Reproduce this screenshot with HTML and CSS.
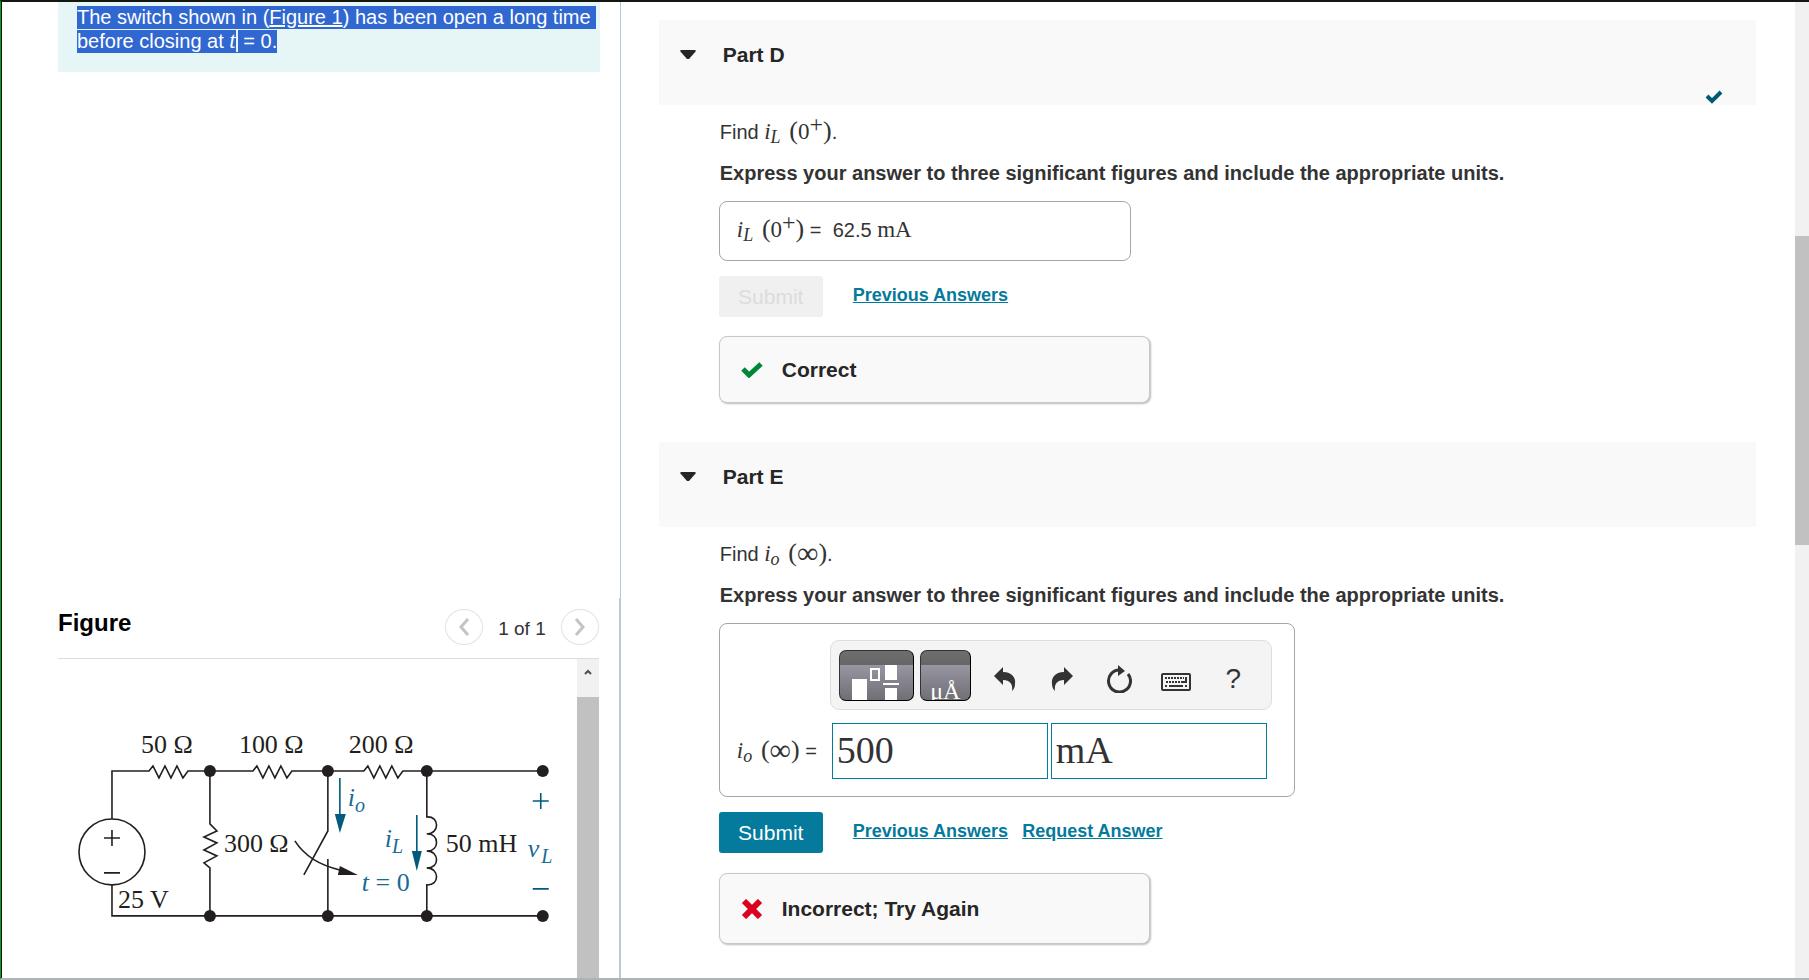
FILE: index.html
```html
<!DOCTYPE html>
<html lang="en">
<head>
  <meta charset="UTF-8" />
  <meta name="viewport" content="width=device-width, initial-scale=1.0"/>
  <title>Circuit Homework</title>
  <link rel="stylesheet" href="styles.css">
</head>
<body>
  <div class="page">
    <aside class="left">
      <section class="problem-area">
        <p class="problem"><span class="marked">The switch shown in (<a href="#figure">Figure 1</a>) has been open a long time&nbsp;</span><br><span class="marked">before closing at <i class="math">t</i><span class="cursor"></span> = 0.</span></p>
      </section>

      <section class="figure" id="figure">
        <div class="figure-head">
          <h2>Figure</h2>
          <div class="pager">
            <button type="button" aria-label="Previous figure">
              <svg width="12" height="20" viewBox="0 0 12 20"><path d="M10 2 L3 10 L10 18"/></svg>
            </button>
            <span>1 of 1</span>
            <button type="button" aria-label="Next figure">
              <svg width="12" height="20" viewBox="0 0 12 20"><path d="M2 2 L9 10 L2 18"/></svg>
            </button>
          </div>
        </div>
        <div class="figure-body">
          <div class="drawing">
            <svg class="circuit" viewBox="0 0 517 260" role="img" aria-label="Circuit diagram">
              <g class="wire">
                <path d="M52 109 V61 H86 l3 0 l4 -5 l6 12 l6 -12 l6 12 l6 -12 l6 12 l5 -7 H190 l3 0 l4 -5 l6 12 l6 -12 l6 12 l6 -12 l6 12 l5 -7 H301 l3 0 l4 -5 l6 12 l6 -12 l6 12 l6 -12 l6 12 l5 -7 H483"/>
                <path d="M52 175 V206 H483"/>
                <path d="M150 61 V114 l7 7 l-13 6 l13 6 l-13 7 l13 6 l-13 7 l6 5 V206"/>
                <path d="M268 61 V121 L244 165 M268 149 V206"/>
                <path d="M367 61 V107 C380 106 380 124 367 124 C380 123 380 142 367 141 C380 141 380 159 367 158 C380 158 380 176 367 175 V206"/>
                <path d="M235 131 Q249 153 280 160"/>
                <circle cx="52" cy="142" r="33"/>
                <path d="M44 163 H60 M44 128 H60 M52 120 V136"/>
              </g>
              <path class="dot" d="M280 156 L298 165 L278 165 Z"/>
              <g class="dot">
                <circle cx="150" cy="61" r="6"/>
                <circle cx="268" cy="61" r="6"/>
                <circle cx="367" cy="61" r="6"/>
                <circle cx="483" cy="61" r="6"/>
                <circle cx="150" cy="206" r="6"/>
                <circle cx="268" cy="206" r="6"/>
                <circle cx="367" cy="206" r="6"/>
                <circle cx="483" cy="206" r="6"/>
              </g>
              <g class="current">
                <path d="M280 68 V106 M357 105 V143 M473 91 H489 M481 83 V99 M473 179 H489"/>
                <path class="head" d="M275 104 H286 L280 123 Z M352 141 H362 L357 161 Z"/>
              </g>
              <g class="label">
                <text x="81" y="43">50 Ω</text>
                <text x="179" y="43">100 Ω</text>
                <text x="289" y="43">200 Ω</text>
                <text x="164" y="142">300 Ω</text>
                <text x="58" y="198">25 V</text>
                <text x="386" y="142">50 mH</text>
              </g>
              <g class="label blue">
                <text x="288" y="96"><tspan class="it">i</tspan><tspan class="it sub" dy="6">o</tspan></text>
                <text x="325" y="137"><tspan class="it">i</tspan><tspan class="it sub" dy="6">L</tspan></text>
                <text x="468" y="147"><tspan class="it">v</tspan><tspan class="it sub" dx="2" dy="6">L</tspan></text>
                <text x="302" y="181"><tspan class="it">t</tspan> = 0</text>
              </g>
            </svg>
          </div>
          <div class="figure-scroll">
            <svg width="8" height="6" viewBox="0 0 8 6"><path d="M1 5 L4 2 L7 5"/></svg>
            <div class="thumb"></div>
          </div>
        </div>
      </section>
    </aside>

    <main class="parts">
      <section class="part">
        <header class="part-head">
          <svg class="toggle" width="16" height="9" viewBox="0 0 16 9"><path d="M1 0 H15 L16 1 L9 9 H7 L0 1 Z"/></svg>
          <h2>Part D</h2>
          <svg class="done" width="18" height="14" viewBox="0 0 18 14"><path d="M2 6 L7 11 L16 2"/></svg>
        </header>
        <div class="part-body">
          <p class="question">Find <span class="math"><i>i<sub>L</sub></i> <span class="paren open">(</span>0<sup>+</sup><span class="paren">)</span></span>.</p>
          <p class="instruction">Express your answer to three significant figures and include the appropriate units.</p>
          <div class="answer answer-done">
            <span class="math"><i>i<sub>L</sub></i> <span class="paren open">(</span>0<sup>+</sup><span class="paren">)</span></span> =&nbsp; 62.5 <span class="math">mA</span>
          </div>
          <div class="actions">
            <button type="button" class="submit" disabled>Submit</button>
            <a href="#">Previous Answers</a>
          </div>
          <div class="feedback">
            <svg class="correct" width="22" height="16" viewBox="0 0 22 16"><path d="M2 7 L8 13 L20 2"/></svg>
            <strong>Correct</strong>
          </div>
        </div>
      </section>

      <section class="part">
        <header class="part-head">
          <svg class="toggle" width="16" height="9" viewBox="0 0 16 9"><path d="M1 0 H15 L16 1 L9 9 H7 L0 1 Z"/></svg>
          <h2>Part E</h2>
        </header>
        <form class="part-body">
          <p class="question">Find <span class="math"><i>i<sub>o</sub></i> <span class="paren open">(</span><span class="inf">∞</span><span class="paren">)</span></span>.</p>
          <p class="instruction">Express your answer to three significant figures and include the appropriate units.</p>
          <div class="answer answer-edit">
            <div class="toolbar">
              <button type="button" class="palette wide" aria-label="Templates">
                <svg width="73" height="49" viewBox="0 0 73 49">
                  <path class="fill" d="M12 28 H27 V49 H12 Z M45 14 H57 V29 H45 Z M45 37 H57 V49 H45 Z M43 32 H59 V34 H43 Z"/>
                  <path class="line" d="M31 18 H39 V29 H31 Z"/>
                </svg>
              </button>
              <button type="button" class="palette" aria-label="Symbols"><span>μÅ</span></button>
              <button type="button" class="tool" aria-label="Undo">
                <svg width="22" height="24" viewBox="0 0 22 24"><path class="fill" d="M0 9 L9 0 V5 C18 5 22 11 21 17 C21 20 20 22 18 24 C19 17 16 13 9 13 V18 Z"/></svg>
              </button>
              <button type="button" class="tool" aria-label="Redo">
                <svg width="22" height="24" viewBox="0 0 22 24"><path class="fill" d="M22 9 L13 0 V5 C4 5 0 11 1 17 C1 20 2 22 4 24 C3 17 6 13 13 13 V18 Z"/></svg>
              </button>
              <button type="button" class="tool" aria-label="Reset">
                <svg width="26" height="28" viewBox="0 0 26 28"><path class="ring" d="M14 5 A11 11 0 1 0 22 9"/><path class="fill" d="M12 0 L19 6 L12 11 Z"/></svg>
              </button>
              <button type="button" class="tool keyboard" aria-label="Keyboard shortcuts">
                <svg width="30" height="18" viewBox="0 0 30 18">
                  <rect class="frame" x="1" y="1" width="28" height="16" rx="1"/>
                  <path class="keys" d="M4 5 H23 M5 9 H22"/>
                  <path class="line" d="M4 13 H6 M8 13 H22 M24 13 H26 M25 4 V9 H22"/>
                </svg>
              </button>
              <button type="button" class="tool help" aria-label="Help">?</button>
            </div>
            <label class="eq" for="value"><span class="math"><i>i<sub>o</sub></i> <span class="paren open">(</span><span class="inf">∞</span><span class="paren">)</span></span> =</label>
            <div class="fields">
              <input type="text" id="value" value="500">
              <input type="text" id="units" value="mA" aria-label="Units">
            </div>
          </div>
          <div class="actions">
            <button type="submit" class="submit">Submit</button>
            <a href="#">Previous Answers</a>
            <a href="#">Request Answer</a>
          </div>
          <div class="feedback tall">
            <svg class="wrong" width="22" height="20" viewBox="0 0 22 20"><path d="M3 2 L19 18 M19 2 L3 18"/></svg>
            <strong>Incorrect; Try Again</strong>
          </div>
        </form>
      </section>
    </main>

    <div class="page-scroll"><div class="thumb"></div></div>
  </div>
</body>
</html>
```
FILE: styles.css
```css
* {
  box-sizing: border-box;
}

body {
  margin: 0;
  font-family: "Liberation Sans", Arial, sans-serif;
  font-size: 20px;
  color: #333;
  background-color: #fff;
}

h2, p {
  margin: 0;
}

svg {
  display: block;
  fill: none;
}

button {
  font-family: inherit;
  padding: 0;
  cursor: pointer;
}

.page {
  display: grid;
  grid-template-columns: 19fr 36fr 14px;
  grid-template-rows: minmax(0, 1fr);
  height: 100vh;
  border-top: 2px solid #14170f;
  border-bottom: 2px solid #b0b4b4;
  border-left: 1px solid #00a020;
  box-shadow: inset 1px 0 #111;
  overflow: hidden;
}

/* left column */
.left {
  display: flex;
  flex-direction: column;
  min-height: 0;
}

.problem-area {
  flex: 1;
  margin-left: 57px;
  padding-right: 20px;
  border-right: 1px solid #b8c9dc;
}

.problem {
  height: 70px;
  padding: 3px 0 0 19px;
  line-height: 24px;
  background-color: #e6f6f6;
  color: #fff;
  white-space: nowrap;
}

.problem a {
  color: #fff;
}

.marked {
  padding-bottom: 1px;
  background-color: #3067d1;
}

.cursor {
  border-left: 2px solid #e6f6f6;
}

.figure {
  flex: 0 0 380px;
  display: flex;
  flex-direction: column;
  margin-left: 57px;
  padding-right: 20px;
  border-right: 2px solid #b8c9dc;
}

.figure-head {
  display: flex;
  justify-content: space-between;
  height: 61px;
  padding-top: 11px;
  border-bottom: 1px solid #ddd;
}

.figure-head h2 {
  font-size: 24px;
  line-height: 28px;
  color: #000;
}

.pager {
  display: flex;
  gap: 15px;
  font-size: 19px;
  line-height: 40px;
}

.pager button {
  display: flex;
  align-items: center;
  justify-content: center;
  width: 38px;
  height: 36px;
  border: 1px solid #e2e2e2;
  border-radius: 50%;
  background-color: #fff;
}

.pager path {
  stroke: #c4c4c4;
  stroke-width: 3;
}

.figure-body {
  display: flex;
  flex: 1;
  min-height: 0;
}

.drawing {
  flex: 1;
  padding: 51px 0 0 2px;
  overflow: hidden;
}

.circuit {
  width: 100%;
}

.wire {
  stroke: #231f20;
  stroke-width: 1.6;
}

.dot {
  fill: #231f20;
}

.current {
  stroke: #005b7f;
  stroke-width: 1.6;
}

.current .head {
  fill: #005b7f;
  stroke: none;
}

.label {
  fill: #231f20;
  font-family: "Liberation Serif", "Times New Roman", serif;
  font-size: 26px;
}

.blue {
  fill: #1a6a94;
}

.it {
  font-style: italic;
}

.sub {
  font-size: 20px;
}

.figure-scroll {
  display: flex;
  flex-direction: column;
  width: 22px;
  padding-top: 10px;
  background-color: #f1f1f1;
}

.figure-scroll svg {
  margin: 0 auto 22px;
}

.figure-scroll path {
  stroke: #505050;
  stroke-width: 2;
}

.thumb {
  background-color: #c1c1c1;
}

.figure-scroll .thumb {
  flex: 1;
}

/* right column */
.parts {
  padding: 18px 39px 0 38px;
}

.part {
  margin-bottom: 39px;
}

.part-head {
  display: flex;
  align-items: flex-start;
  height: 85px;
  padding: 22px 33px 0 21px;
  background-color: #f9f9f9;
}

.part-head h2 {
  margin-left: 27px;
  font-size: 21px;
  line-height: 26px;
  color: #262626;
}

.toggle {
  margin-top: 8px;
  fill: #262626;
}

.done {
  align-self: flex-end;
  margin: 0 0 1px auto;
  stroke: #005b70;
  stroke-width: 4;
}

.part-body {
  padding: 12px 0 0 60px;
}

.question {
  height: 30px;
  padding-left: 1px;
  line-height: 30px;
}

.instruction {
  margin-top: 14px;
  padding-left: 1px;
  font-weight: bold;
  line-height: 24px;
}

.math {
  font-family: "Liberation Serif", "Times New Roman", serif;
  font-size: 23px;
}

.math sub,
.math sup {
  line-height: 0;
}

.math sub {
  font-size: 18px;
  vertical-align: -4px;
}

.math sup {
  font-size: 24px;
  vertical-align: 7px;
}

.paren {
  font-size: 26px;
  line-height: 0;
}

.open {
  padding-left: 3px;
}

.inf {
  font-size: 30px;
  line-height: 0;
  vertical-align: -2px;
}

.answer {
  margin-top: 16px;
  border: 1px solid #a6a6a6;
  border-radius: 8px;
}

.answer-done {
  max-width: 412px;
  height: 60px;
  padding-left: 17px;
  line-height: 56px;
}

.answer-edit {
  display: grid;
  grid-template-columns: 94px 441px;
  row-gap: 13px;
  align-content: start;
  align-items: center;
  max-width: 576px;
  height: 174px;
  padding: 16px 0 0 17px;
}

.toolbar {
  grid-column: 2;
  display: flex;
  align-items: center;
  height: 70px;
  margin-left: -1px;
  padding-left: 8px;
  border: 1px solid #ddd;
  border-radius: 9px;
  background-color: #f4f4f4;
}

.palette {
  display: flex;
  flex: none;
  align-items: flex-end;
  justify-content: center;
  width: 51px;
  height: 51px;
  margin-right: 6px;
  border: 1px solid #333;
  border-right-color: #000;
  border-bottom-color: #000;
  border-radius: 7px;
  background: linear-gradient(#6e6e6e 0, #666 14px, #9896a3 14px, #6f6f74 100%);
  overflow: hidden;
}

.palette.wide {
  width: 75px;
}

.palette .fill {
  fill: #fff;
}

.palette .line {
  stroke: #fff;
  stroke-width: 2;
}

.palette span {
  font-family: "Liberation Serif", "Times New Roman", serif;
  font-size: 24px;
  line-height: 18px;
  color: #fff;
}

.tool {
  display: flex;
  flex: none;
  align-items: center;
  justify-content: center;
  width: 57px;
  height: 60px;
  padding-top: 7px;
  border: none;
  background: none;
  color: #333;
}

.tool .fill {
  fill: #333;
}

.tool .ring,
.tool .frame,
.tool .line,
.tool .keys {
  stroke: #333;
  stroke-width: 2;
}

.tool .ring {
  stroke-width: 3;
}

.tool .keys {
  stroke-dasharray: 2 1;
}

.keyboard {
  padding-top: 14px;
}

.help {
  font-size: 28px;
}

.fields {
  display: flex;
  gap: 3px;
  padding-left: 1px;
}

.fields input {
  width: 216px;
  height: 56px;
  padding: 0 4px 3px;
  border: 1px solid #007c9c;
  font-family: "Liberation Serif", "Times New Roman", serif;
  font-size: 38px;
  color: #333;
}

.actions {
  display: flex;
  gap: 14px;
  margin-top: 15px;
}

.actions a {
  margin-top: 8px;
  font-size: 18px;
  font-weight: bold;
  line-height: 22px;
  color: #047a9c;
}

.submit {
  width: 104px;
  height: 41px;
  margin-right: 16px;
  border: none;
  border-radius: 3px;
  background-color: #047a9c;
  color: #fff;
  font-size: 21px;
}

.submit:disabled {
  background-color: #f0f0f0;
  color: #dcdcdc;
}

.feedback {
  display: flex;
  align-items: center;
  gap: 19px;
  max-width: 431px;
  height: 67px;
  margin-top: 19px;
  padding-left: 21px;
  border: 1px solid #c7c7c7;
  border-radius: 8px;
  background-color: #f9f9f9;
  box-shadow: 1px 1px 2px #bbb;
  color: #262626;
}

.feedback strong {
  font-size: 21px;
}

.feedback.tall {
  height: 71px;
  margin-top: 20px;
}

.correct {
  stroke: #008638;
  stroke-width: 5;
}

.wrong {
  stroke: #db0020;
  stroke-width: 6;
}

.page-scroll {
  padding-top: 234px;
  background-color: #f1f1f1;
}

.page-scroll .thumb {
  height: 309px;
}
```
